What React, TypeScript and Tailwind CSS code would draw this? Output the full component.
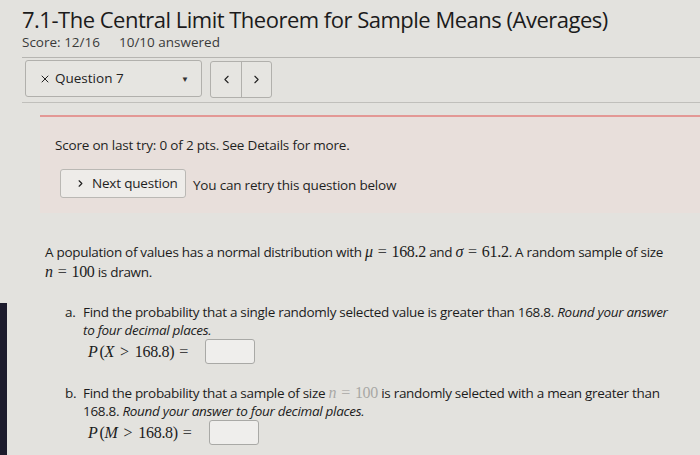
import { ChevronLeft, ChevronRight, X } from 'lucide-react';

function Var({ children }: { children: React.ReactNode }) {
  return <span className="font-['Liberation_Serif',serif] text-[16px] font-normal italic">{children}</span>;
}

function Num({ children }: { children: React.ReactNode }) {
  return <span className="font-['Liberation_Serif',serif] text-[16px] font-normal">{children}</span>;
}

function Eq() {
  return <span className="mx-[5px] font-['Liberation_Serif',serif] text-[16px] font-normal text-[#444]">=</span>;
}

function Prob({ name }: { name: string }) {
  return (
    <div className="flex h-[25px] items-center pl-[5px]">
      <Var>P</Var>
      <Num>
        <span className="ml-[2px]">(</span>
      </Num>
      <Var>{name}</Var>
      <Num>
        <span className="mx-[6px]">&gt;</span>168.8)
      </Num>
      <Eq />
      <span className="ml-[12px] inline-block h-[25px] w-[50px] shrink-0 rounded-[3px] border border-[#a9a9a6] bg-[#efeeec]" />
    </div>
  );
}

export default function App() {
  return (
    <div className="h-[455px] w-[700px] overflow-hidden bg-[#e3e2de] font-['Open_Sans',sans-serif] text-[#222]">
      <div className="pl-[22px] pt-[5px]">
        <h1 className="text-[22px] leading-[28px] tracking-[-0.5px] text-[#1b1b1b]">
          7.1-The Central Limit Theorem for Sample Means (Averages)
        </h1>
        <div className="flex gap-[19px] text-[13.5px] leading-[18px] text-[#3a3a3a]">
          <span>Score: 12/16</span>
          <span>10/10 answered</span>
        </div>
        <div className="mt-[6px] border-t border-[#b6b5b1]" />

        <div className="mt-[2px] flex gap-[8px] pl-[3px]">
          <div className="flex h-[37px] w-[177px] items-center rounded-[3px] border border-[#b1b0ac] bg-[#e6e5e1] pl-[13px] pr-[12px] text-[13.5px] text-[#222]">
            <X className="mr-[4px] h-[12px] w-[12px]" strokeWidth={2} />
            <span>Question 7</span>
            <span className="ml-auto text-[8px] text-[#333]">▼</span>
          </div>
          <div className="mt-[1px] flex h-[37px] w-[62px] rounded-[3px] border border-[#b1b0ac] bg-[#e6e5e1]">
            <div className="flex w-[31px] items-center justify-center border-r border-[#b1b0ac]">
              <ChevronLeft className="h-[13px] w-[13px]" strokeWidth={2} />
            </div>
            <div className="flex flex-1 items-center justify-center">
              <ChevronRight className="h-[13px] w-[13px]" strokeWidth={2} />
            </div>
          </div>
        </div>
        <div className="mt-[4px] border-t border-[#c0bfbb]" />
      </div>

      <div className="ml-[40px] mt-[12px] h-[98px] border-t-2 border-[#e39895] bg-[#e8dfdb] pl-[15px] pt-[19px] text-[13.5px] tracking-[-0.2px] text-[#1f1f1f]">
        <p className="leading-[18px]">Score on last try: 0 of 2 pts. See Details for more.</p>
        <div className="ml-[5px] mt-[15px] flex items-center">
          <div className="flex h-[29px] w-[126px] items-center rounded-[3px] border border-[#bab8b4] bg-[#eeece9] pl-[14px]">
            <ChevronRight className="mr-[6px] h-[11px] w-[11px]" strokeWidth={2.5} />
            Next question
          </div>
          <span className="ml-[7px] pt-[4px]">You can retry this question below</span>
        </div>
      </div>

      <div className="pl-[45px] pt-[29px] text-[13.5px] leading-[19px] tracking-[-0.3px] text-[#1c1c1c]">
        <p className="whitespace-nowrap">
          A population of values has a normal distribution with <Var>μ</Var>
          <Eq />
          <Num>168.2</Num> and <Var>σ</Var>
          <Eq />
          <Num>61.2</Num>. A random sample of size
          <br />
          <Var>n</Var>
          <Eq />
          <Num>100</Num> is drawn.
        </p>
      </div>

      <div className="mt-[21px] border-l-[7px] border-[#1c1b2c] pl-[58px] text-[13.5px] leading-[18px] tracking-[-0.3px] text-[#1c1c1c]">
        <div className="flex">
          <span className="w-[18px]">a.</span>
          <div className="whitespace-nowrap">
            <p>
              Find the probability that a single randomly selected value is greater than 168.8.{' '}
              <i>Round your answer</i>
              <br />
              <i>to four decimal places.</i>
            </p>
            <Prob name="X" />
          </div>
        </div>

        <div className="mt-[20px] flex pb-[20px]">
          <span className="w-[18px]">b.</span>
          <div className="whitespace-nowrap">
            <p>
              Find the probability that a sample of size{' '}
              <span className="opacity-30">
                <Var>n</Var>
                <Eq />
                <Num>100</Num>
              </span>{' '}
              is randomly selected with a mean greater than
              <br />
              168.8. <i>Round your answer to four decimal places.</i>
            </p>
            <Prob name="M" />
          </div>
        </div>
      </div>
    </div>
  );
}
